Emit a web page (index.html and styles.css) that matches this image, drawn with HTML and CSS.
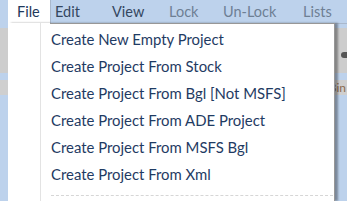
FILE: index.html
```html
<!DOCTYPE html>
<html>
<head>
<meta charset="utf-8">
<link rel="stylesheet" href="styles.css">
</head>
<body>
<div class="app">
  <div class="menubar">
    <div class="mtab file">File</div>
    <div class="mbar">
      <div class="mitem w-edit">Edit</div>
      <div class="mitem w-view">View</div>
      <div class="mitem dim w-lock">Lock</div>
      <div class="mitem dim w-unlock">Un-Lock</div>
      <div class="mitem dim">Lists</div>
    </div>
  </div>
  <div class="content">
    <div class="toolbar"><span class="tool-icon"></span></div>
    <div class="tabs"><span class="tab">Bin</span></div>
  </div>
  <div class="dropdown">
    <div class="gutter"></div>
    <ul class="items">
      <li>Create New Empty Project</li>
      <li>Create Project From Stock</li>
      <li>Create Project From Bgl [Not MSFS]</li>
      <li>Create Project From ADE Project</li>
      <li>Create Project From MSFS Bgl</li>
      <li>Create Project From Xml</li>
      <li class="sep"></li>
    </ul>
  </div>
</div>
</body>
</html>
```
FILE: styles.css
```css
* { box-sizing: border-box; }
html, body { margin: 0; padding: 0; }
body {
  width: 347px;
  height: 201px;
  overflow: hidden;
  background: #bdd2ec;
  font-family: Lato, "Noto Sans", sans-serif;
}
.app { position: relative; width: 347px; height: 201px; overflow: hidden; }
.menubar {
  display: flex;
  height: 24px;
  padding-left: 8px;
}
.mtab.file {
  width: 42px;
  height: 24px;
  background: #fff;
  color: #1e395b;
  font-size: 14.5px;
  line-height: 24px;
  padding-left: 9px;
}
.mbar {
  flex: 1;
  display: flex;
  padding-left: 4px;
  border-left: 1px solid #a9b8cc;
  border-bottom: 1px solid #a9b8cc;
  background: #bdd2ec;
}
.mitem {
  font-size: 14.5px;
  line-height: 23px;
  color: #34475f;
  white-space: nowrap;
}
.mitem.dim { color: #6e7f94; }
.w-edit { width: 57px; }
.w-view { width: 57px; }
.w-lock { width: 54px; }
.w-unlock { width: 80px; }
.content { padding-top: 4px; }
.toolbar {
  height: 45px;
  background: #cdcdcd;
  display: flex;
  justify-content: flex-end;
  align-items: center;
}
.tool-icon {
  width: 6px;
  height: 6px;
  background: #555;
  border-radius: 3px 0 0 3px;
  margin-top: 8px;
}
.tabs {
  margin-top: 7px;
  height: 15px;
  background: #cfcfcf;
  display: flex;
  justify-content: flex-end;
}
.tab { font-size: 12px; line-height: 15px; color: #8b6b4f; padding-right: 1px; }
.dropdown {
  position: absolute;
  left: 8px;
  top: 23px;
  width: 327px;
  height: 178px;
  background: #fff;
  border-right: 1px solid #979797;
  box-shadow: 3px 0 2px rgba(0,0,0,0.35);
  display: flex;
}
.dropdown::before {
  content: "";
  position: absolute;
  left: 42px;
  right: -1px;
  top: 0;
  border-top: 1px solid #979797;
}
.gutter {
  width: 33px;
  border-right: 1px solid #e3e3e3;
}
.items {
  list-style: none;
  margin: 0;
  padding: 3px 0 0 10px;
  flex: 1;
}
.items li {
  height: 27px;
  line-height: 27px;
  font-size: 14.9px;
  color: #1f3b63;
  white-space: nowrap;
}
.items li.sep {
  height: 0;
  margin-top: 7px;
  border-top: 1px dashed #d6d6d6;
  margin-right: 1px;
}
```
